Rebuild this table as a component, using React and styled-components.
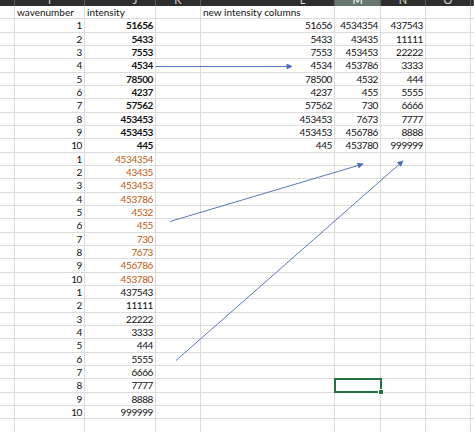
import React from "react";
import styled, { createGlobalStyle } from "styled-components";

const GlobalStyle = createGlobalStyle`
  html, body {
    margin: 0;
    padding: 0;
    background: #ffffff;
    overflow: hidden;
  }
`;

const COLUMNS = "15px 70px 71px 45px 134px 46px 45px 45px 1fr";
const ROW_H = 13.333;

const Sheet = styled.div`
  position: relative;
  width: 474px;
  height: 432px;
  overflow: hidden;
  background: #ffffff;
  font-family: Lato, "Open Sans", sans-serif;
`;

const HeaderStrip = styled.div`
  display: grid;
  grid-template-columns: ${COLUMNS};
  height: 6px;
  overflow: hidden;
  background: #2e2e2e;
`;

const HeaderCell = styled.div`
  border-right: 1px solid #5c5c5c;
  background: ${(p) => (p.$active ? "#68776d" : "transparent")};
  color: ${(p) => (p.$active ? "#ffffff" : "#d8d8d8")};
  font-size: 11px;
  line-height: 11px;
  margin-top: -6px;
  text-align: center;
  padding-left: ${(p) => p.$shift || 0}px;
`;

const Row = styled.div`
  display: grid;
  grid-template-columns: ${COLUMNS};
  height: ${ROW_H}px;
`;

const toneColor = {
  normal: "#111111",
  orange: "#c55a11",
};

const Cell = styled.div`
  box-sizing: border-box;
  border-right: 1px solid #dcdcdc;
  border-bottom: 1px solid #dcdcdc;
  padding: 0 2px;
  font-size: 10px;
  letter-spacing: ${(p) => (p.$align === "right" ? "-0.4px" : "0")};
  line-height: ${ROW_H - 1}px;
  text-align: ${(p) => p.$align || "left"};
  font-weight: ${(p) => (p.$bold ? 700 : 400)};
  color: ${(p) => toneColor[p.$tone || "normal"]};
  white-space: nowrap;
`;

const Overlay = styled.svg`
  position: absolute;
  left: 0;
  top: 0;
  width: 474px;
  height: 432px;
  pointer-events: none;
`;

const Selection = styled.div`
  position: absolute;
  left: 334px;
  top: 378px;
  width: 48px;
  height: 15px;
  box-sizing: border-box;
  border: 2px solid #217346;

  &::after {
    content: "";
    position: absolute;
    right: -4px;
    bottom: -4px;
    width: 4px;
    height: 4px;
    background: #217346;
    border: 1px solid #ffffff;
  }
`;

const headerLetters = [
  { l: "", shift: 0 },
  { l: "I", shift: 0 },
  { l: "J", shift: 30 },
  { l: "K", shift: 0 },
  { l: "L", shift: 70 },
  { l: "M", shift: 0, active: true },
  { l: "N", shift: 0 },
  { l: "O", shift: 0 },
  { l: "", shift: 0 },
];

const intensity = [51656, 5433, 7553, 4534, 78500, 4237, 57562, 453453, 453453, 445];
const colM = [4534354, 43435, 453453, 453786, 4532, 455, 730, 7673, 456786, 453780];
const colN = [437543, 11111, 22222, 3333, 444, 5555, 6666, 7777, 8888, 999999];

const empty = () => ({});

function buildRows() {
  const rows = [];
  rows.push([
    {},
    { text: "wavenumber" },
    { text: "intensity" },
    {},
    { text: "new intensity columns" },
    {},
    {},
    {},
    {},
  ]);
  for (let i = 0; i < 10; i++) {
    rows.push([
      {},
      { text: i + 1, align: "right" },
      { text: intensity[i], align: "right", bold: true },
      {},
      { text: intensity[i], align: "right" },
      { text: colM[i], align: "right" },
      { text: colN[i], align: "right" },
      {},
      {},
    ]);
  }
  for (let i = 0; i < 10; i++) {
    rows.push([
      {},
      { text: i + 1, align: "right" },
      { text: colM[i], align: "right", tone: "orange" },
      ...Array.from({ length: 6 }, empty),
    ]);
  }
  for (let i = 0; i < 10; i++) {
    rows.push([
      {},
      { text: i + 1, align: "right" },
      { text: colN[i], align: "right" },
      ...Array.from({ length: 6 }, empty),
    ]);
  }
  rows.push(Array.from({ length: 9 }, empty));
  return rows;
}

function Arrows() {
  return (
    <Overlay viewBox="0 0 474 432">
      <defs>
        <marker
          id="head"
          viewBox="0 0 10 10"
          refX="9"
          refY="5"
          markerWidth="7"
          markerHeight="6"
          orient="auto"
          markerUnits="userSpaceOnUse"
        >
          <path d="M0 0 L10 5 L0 10 z" fill="#4a6db8" />
        </marker>
      </defs>
      <g stroke="#5a78b8" strokeWidth="1" fill="none" markerEnd="url(#head)">
        <line x1="156" y1="66.5" x2="292" y2="66.5" />
        <line x1="170" y1="221.5" x2="363" y2="164" />
        <line x1="176" y1="360.5" x2="403" y2="161" />
      </g>
    </Overlay>
  );
}

export default function App() {
  const rows = buildRows();
  return (
    <>
      <GlobalStyle />
      <Sheet>
        <HeaderStrip>
          {headerLetters.map((h, i) => (
            <HeaderCell key={i} $active={h.active} $shift={h.shift}>
              {h.l}
            </HeaderCell>
          ))}
        </HeaderStrip>
        {rows.map((row, r) => (
          <Row key={r}>
            {row.map((c, k) => (
              <Cell key={k} $align={c.align} $bold={c.bold} $tone={c.tone}>
                {c.text}
              </Cell>
            ))}
          </Row>
        ))}
        <Arrows />
        <Selection />
      </Sheet>
    </>
  );
}
